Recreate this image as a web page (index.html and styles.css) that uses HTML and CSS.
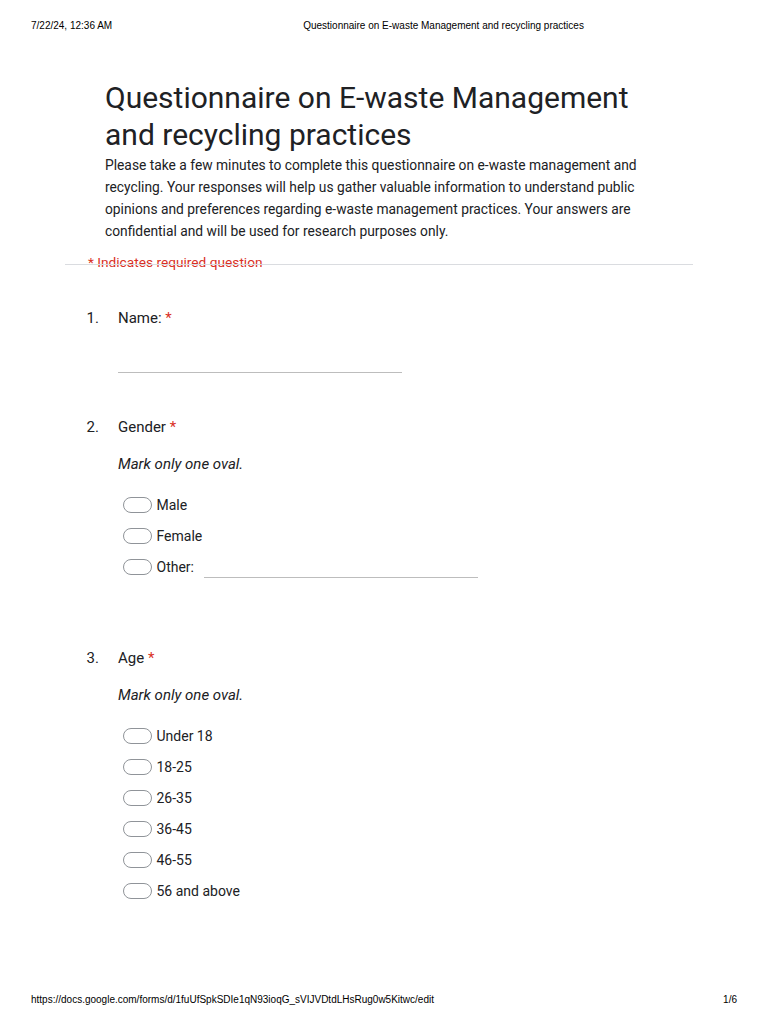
FILE: index.html
```html
<!DOCTYPE html>
<html>
<head>
    <meta charset="UTF-8">
    <title>Questionnaire on E-waste Management and recycling practices</title>
    <link rel="stylesheet" href="styles.css">
</head>
<body>
    <header class="print-head">
        <span>7/22/24, 12:36 AM</span>
        <span class="doc-title">Questionnaire on E-waste Management and recycling practices</span>
    </header>

    <main class="form">
        <div class="form-head">
            <h1>Questionnaire on E-waste Management and recycling practices</h1>
            <p class="desc">Please take a few minutes to complete this questionnaire on e-waste management and recycling. Your responses will help us gather valuable information to understand public opinions and preferences regarding e-waste management practices. Your answers are confidential and will be used for research purposes only.</p>
        </div>

        <div class="required"><span>* Indicates required question</span></div>

        <ol class="questions">
            <li class="question">
                <span class="num">1.</span>
                <div class="body">
                    <div class="q-title">Name: <span class="star">*</span></div>
                    <div class="text-answer"></div>
                </div>
            </li>
            <li class="question">
                <span class="num">2.</span>
                <div class="body">
                    <div class="q-title">Gender <span class="star">*</span></div>
                    <div class="hint">Mark only one oval.</div>
                    <div class="choices">
                        <div class="choice"><span class="oval"></span>Male</div>
                        <div class="choice"><span class="oval"></span>Female</div>
                        <div class="choice"><span class="oval"></span>Other:<span class="other-line"></span></div>
                    </div>
                </div>
            </li>
            <li class="question">
                <span class="num">3.</span>
                <div class="body">
                    <div class="q-title">Age <span class="star">*</span></div>
                    <div class="hint">Mark only one oval.</div>
                    <div class="choices">
                        <div class="choice"><span class="oval"></span>Under 18</div>
                        <div class="choice"><span class="oval"></span>18-25</div>
                        <div class="choice"><span class="oval"></span>26-35</div>
                        <div class="choice"><span class="oval"></span>36-45</div>
                        <div class="choice"><span class="oval"></span>46-55</div>
                        <div class="choice"><span class="oval"></span>56 and above</div>
                    </div>
                </div>
            </li>
        </ol>
    </main>

    <footer class="print-foot">
        <span>https://docs.google.com/forms/d/1fuUfSpkSDIe1qN93ioqG_sVIJVDtdLHsRug0w5Kitwc/edit</span>
        <span>1/6</span>
    </footer>
</body>
</html>
```

FILE: styles.css
```css
body {
    margin: 0;
    min-height: 1024px;
    display: flex;
    flex-direction: column;
    background-color: white;
    color: #202124;
    font-family: Roboto, "Noto Sans", Arial, sans-serif;
}
.print-head,
.print-foot {
    font-family: "Liberation Sans", Arial, sans-serif;
    font-size: 10px;
    line-height: 12px;
    color: black;
}
.print-head {
    display: flex;
    padding: 20px 31px 0;
}
.doc-title {
    margin-left: 191px;
}
.print-foot {
    display: flex;
    justify-content: space-between;
    margin-top: auto;
    padding: 0 31px 18px;
}
.form {
    margin: 0 75px 0 65px;
}
.form-head {
    padding-left: 40px;
    max-width: 545px;
}
h1 {
    margin: 47px 0 0;
    font-size: 30px;
    font-weight: 400;
    line-height: 37px;
}
.desc {
    margin: 1px 0 0;
    font-size: 13.8px;
    line-height: 22px;
}
.required {
    position: relative;
    margin-top: 10px;
    padding-left: 23px;
    font-size: 13.7px;
    line-height: 20px;
    color: #d93025;
}
.required::before {
    content: "";
    position: absolute;
    left: 0;
    right: 0;
    top: 12px;
    border-top: 1px solid #dadce0;
}
.questions {
    list-style: none;
    margin: 34px 0 0;
    padding: 0 0 0 21.5px;
}
.question {
    display: grid;
    grid-template-columns: 31.5px 1fr;
    font-size: 15px;
    line-height: 24px;
}
.question + .question {
    margin-top: 42px;
}
.star {
    color: #d93025;
}
.text-answer {
    margin-top: 42px;
    width: 284px;
    border-bottom: 1.5px solid #bdbdbd;
}
.hint {
    margin-top: 13px;
    font-style: italic;
}
.choices {
    margin: 13.5px 0 21px;
}
.choice {
    display: flex;
    align-items: center;
    height: 31px;
    font-size: 14px;
}
.oval {
    width: 27px;
    height: 14px;
    margin: 0 5px 0 4.5px;
    border: 1.5px solid #909499;
    border-radius: 9px;
}
.other-line {
    align-self: flex-end;
    width: 274px;
    height: 1px;
    margin: 0 0 5px 10px;
    background-color: #bdbdbd;
}
```
